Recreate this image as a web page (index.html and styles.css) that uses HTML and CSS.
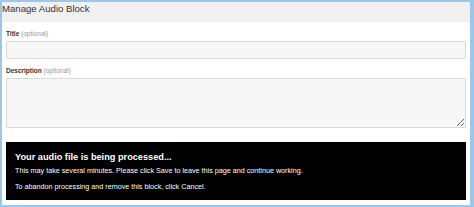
FILE: index.html
```html
<!DOCTYPE html>
<html lang="en">
<head>
  <meta charset="UTF-8">
  <title>Manage Audio Block</title>
  <link rel="stylesheet" href="styles.css">
</head>
<body>
  <div class="frame">
    <div class="header">Manage Audio Block</div>
    <div class="content">
      <form class="block-form">
        <label class="field-label" for="title">Title <span class="optional">(optional)</span></label>
        <input type="text" id="title" class="field-input">
        <label class="field-label desc" for="description">Description <span class="optional">(optional)</span></label>
        <textarea id="description" class="field-area"></textarea>
      </form>
      <div class="notice">
        <h3>Your audio file is being processed...</h3>
        <p>This may take several minutes. Please click Save to leave this page and continue working.</p>
        <p class="second">To abandon processing and remove this block, click Cancel.</p>
      </div>
    </div>
  </div>
</body>
</html>
```

FILE: styles.css
```css
* {
  margin: 0;
  padding: 0;
  box-sizing: border-box;
  font-family: "Liberation Sans", Arial, sans-serif;
}

body {
  background: #fff;
  width: 474px;
  height: 207px;
  overflow: hidden;
}

.frame {
  height: 207px;
  border-style: solid;
  border-color: #9dc7ea;
  border-width: 2px 4px 2px 2px;
  background: #fff;
}

.header {
  height: 20px;
  background: #f0f0f0;
  color: #333;
  font-size: 9.6px;
  line-height: 14px;
}

.content {
  padding: 0 4px 5px 4px;
}

.field-label {
  display: block;
  margin-top: 8px;
  margin-bottom: 3px;
  font-size: 6.5px;
  line-height: 8px;
  font-weight: bold;
  color: #333;
}

.field-label .optional {
  font-weight: normal;
  color: #999;
}

.field-input,
.field-area {
  display: block;
  width: 100%;
  background: #f7f7f7;
  border: 1px solid #dadada;
  border-radius: 1px;
  outline: none;
}

.field-input {
  height: 18px;
}

.field-area {
  height: 50px;
  resize: vertical;
}

.notice {
  margin-top: 14px;
  height: 58px;
  background: #000;
  color: #fff;
  padding: 10px 9px 0 9px;
}

.notice h3 {
  font-size: 9.2px;
  line-height: 10px;
  font-weight: bold;
}

.notice p {
  font-size: 7.2px;
  line-height: 8px;
  margin-top: 5px;
}

.notice p.second {
  margin-top: 8px;
}
```
